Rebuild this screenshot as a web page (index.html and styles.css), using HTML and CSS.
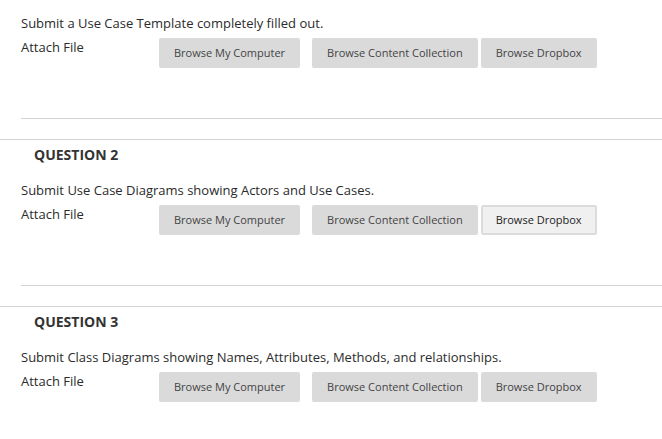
FILE: index.html
```html
<!DOCTYPE html>
<html lang="en">
<head>
<meta charset="utf-8">
<title>Questions</title>
<link rel="stylesheet" href="styles.css">
</head>
<body>
  <section class="question first">
    <div class="q-body">
      <p class="q-text">Submit a Use Case Template completely filled out.</p>
      <div class="attach-row">
        <span class="attach-label">Attach File</span>
        <div class="btns">
          <button class="btn btn-computer">Browse My Computer</button>
          <button class="btn btn-content">Browse Content Collection</button>
          <button class="btn btn-dropbox">Browse Dropbox</button>
        </div>
      </div>
    </div>
  </section>

  <section class="question">
    <h3 class="q-head">QUESTION 2</h3>
    <div class="q-body">
      <p class="q-text">Submit Use Case Diagrams showing Actors and Use Cases.</p>
      <div class="attach-row">
        <span class="attach-label">Attach File</span>
        <div class="btns">
          <button class="btn btn-computer">Browse My Computer</button>
          <button class="btn btn-content">Browse Content Collection</button>
          <button class="btn btn-dropbox is-hover">Browse Dropbox</button>
        </div>
      </div>
    </div>
  </section>

  <section class="question">
    <h3 class="q-head">QUESTION 3</h3>
    <div class="q-body">
      <p class="q-text">Submit Class Diagrams showing Names, Attributes, Methods, and relationships.</p>
      <div class="attach-row">
        <span class="attach-label">Attach File</span>
        <div class="btns">
          <button class="btn btn-computer">Browse My Computer</button>
          <button class="btn btn-content">Browse Content Collection</button>
          <button class="btn btn-dropbox">Browse Dropbox</button>
        </div>
      </div>
    </div>
  </section>
</body>
</html>
```

FILE: styles.css
```css
html, body {
  margin: 0;
  padding: 0;
  background: #ffffff;
}

body {
  font-family: "Open Sans", "Liberation Sans", Arial, sans-serif;
  color: #2b2b2b;
  font-size: 13px;
}

.question {
  border-top: 1px solid #d2d2d2;
  margin-top: 20px;
}

.question.first {
  border-top: none;
  margin-top: 0;
}

.q-head {
  margin: 0;
  padding: 5px 0 0 34px;
  font-size: 14px;
  line-height: 20px;
  font-weight: 700;
  color: #333333;
}

.q-body {
  margin-left: 21px;
  padding-top: 16px;
  padding-bottom: 50px;
  border-bottom: 1px solid #d2d2d2;
}

.question.first .q-body {
  padding-top: 14px;
}

.q-text {
  margin: 0 0 6px 0;
  line-height: 18px;
}

.attach-row {
  display: flex;
  align-items: flex-start;
}

.attach-label {
  width: 138px;
  flex: none;
  line-height: 18px;
}

.btns {
  display: flex;
}

.btn {
  box-sizing: border-box;
  height: 30px;
  padding: 0 15px;
  border: none;
  border-radius: 2px;
  background: #dadada;
  color: #444444;
  font-family: "Open Sans", "Liberation Sans", Arial, sans-serif;
  font-size: 11px;
  line-height: 30px;
  cursor: pointer;
}

.btn-content {
  margin-left: 12px;
}

.btn-dropbox {
  margin-left: 3px;
}

.btn.is-hover {
  background: #f0f0f0;
  border: 2px solid #dcdcdc;
  padding: 0 13px;
  line-height: 26px;
  color: #222222;
}
```
